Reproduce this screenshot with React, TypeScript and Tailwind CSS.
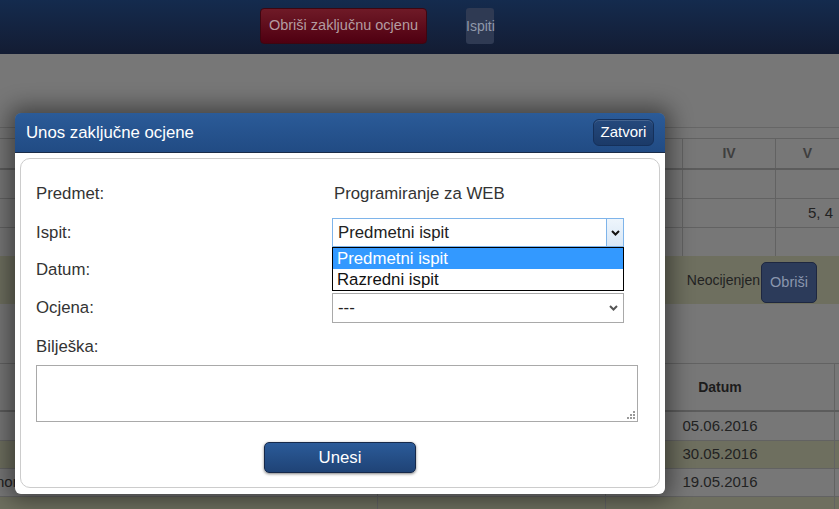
import React from "react";

function Chevron({ color = "#222" }: { color?: string }) {
  return (
    <svg width="9" height="6" viewBox="0 0 9 6">
      <path d="M1 1 L4.5 4.5 L8 1" fill="none" stroke={color} strokeWidth="2" />
    </svg>
  );
}

function Row({ children, olive = false, h = "h-[28px]" }: { children?: React.ReactNode; olive?: boolean; h?: string }) {
  return (
    <div className={`grid grid-cols-[378px_228px_229px_1fr] ${h} border-b border-[#626262] ${olive ? "bg-[#6e6f5f]" : "bg-[#777777]"}`}>
      {children}
    </div>
  );
}

export default function App() {
  return (
    <div className="relative w-[839px] h-[509px] overflow-hidden bg-[#777777] font-['Liberation_Sans',sans-serif] text-[14px] text-[#222]">
      {/* top bar */}
      <nav className="h-[54px] bg-gradient-to-b from-[#142b4e] to-[#131c33] flex items-start pt-[8px] pl-[260px] gap-[39px]">
        <button className="w-[167px] h-[36px] whitespace-nowrap rounded-[4px] border border-[#3e0610] bg-gradient-to-b from-[#6f1a27] to-[#4f0011] text-[14.5px] text-[#b49ca0]">
          Obriši zaključnu ocjenu
        </button>
        <button className="w-[28px] h-[36px] whitespace-nowrap rounded-[3px] bg-[#2f3a53] text-[14px] text-[#8f98aa]">Ispiti</button>
      </nav>

      <div className="h-[74px] bg-[#777777] border-b border-[#666]" />

      {/* table 1 */}
      <div className="pt-[10px] bg-[#777777]">
        <div className="grid grid-cols-[683px_93px_1fr] h-[32px] border-y border-[#626262] border-b-2 border-b-[#5c5c5c] font-bold text-[#3e3e3e]">
          <div className="border-r border-[#626262]" />
          <div className="border-r border-[#626262] flex items-center justify-center">IV</div>
          <div className="flex items-center justify-center">V</div>
        </div>
        <div className="grid grid-cols-[683px_93px_1fr] h-[29px] border-b border-[#626262]">
          <div className="border-r border-[#626262]" />
          <div className="border-r border-[#626262]" />
          <div />
        </div>
        <div className="grid grid-cols-[683px_93px_1fr] h-[29px] border-b border-[#626262]">
          <div className="border-r border-[#626262]" />
          <div className="border-r border-[#626262]" />
          <div className="flex items-center justify-end pr-[6px] text-[15px]">5, 4</div>
        </div>
        <div className="grid grid-cols-[683px_93px_1fr] h-[28px]">
          <div className="border-r border-[#626262]" />
          <div className="border-r border-[#626262]" />
          <div />
        </div>
      </div>
      <div className="h-[48px] bg-[#6e6f5f] flex items-end justify-end pr-[22px] pb-[1px]">
        <span className="mb-[12px]">Neocijenjen</span>
        <button className="ml-[1px] w-[56px] h-[41px] rounded-[5px] border border-[#1e2740] bg-[#2c3b5a] text-[14.5px] text-[#8a96ae]">
          Obriši
        </button>
      </div>

      {/* table 2 */}
      <div className="pt-[59px] bg-[#777777]">
        <div className="grid grid-cols-[378px_228px_229px_1fr] h-[49px] border-t border-[#626262] border-b-2 border-b-[#5c5c5c]">
          <div className="border-r border-[#626262]" />
          <div className="border-r border-[#626262]" />
          <div className="border-r border-[#626262] flex items-center justify-center font-bold text-[#1c1c1c]">Datum</div>
          <div />
        </div>
        <Row h="h-[29px]">
          <div className="border-r border-[#626262]" />
          <div className="border-r border-[#626262]" />
          <div className="border-r border-[#626262] flex items-center justify-center text-[15px]">05.06.2016</div>
        </Row>
        <Row olive>
          <div className="border-r border-[#626262]" />
          <div className="border-r border-[#626262]" />
          <div className="border-r border-[#626262] flex items-center justify-center text-[15px]">30.05.2016</div>
        </Row>
        <Row>
          <div className="border-r border-[#626262] flex items-center text-[15px]">
            <span className="-ml-[4px]">nor</span>
          </div>
          <div className="border-r border-[#626262]" />
          <div className="border-r border-[#626262] flex items-center justify-center text-[15px]">19.05.2016</div>
        </Row>
        <Row olive>
          <div className="border-r border-[#626262]" />
          <div className="border-r border-[#626262] flex items-start pt-[8px] justify-center text-[15px]">5</div>
          <div className="border-r border-[#626262] flex items-start pt-[8px] justify-center text-[15px]">09.05.2016</div>
        </Row>
      </div>

      {/* modal */}
      <div className="absolute left-[15px] top-[113px] w-[650px] h-[381px] rounded-[6px] shadow-[0_0_22px_6px_rgba(0,0,0,0.45)] flex flex-col text-[16.8px]">
        <div className="h-[40px] rounded-t-[6px] bg-gradient-to-b from-[#2b5b98] to-[#214b84] border-b border-[#1a2c48] flex items-center justify-between pl-[11px] pr-[11px]">
          <span className="text-white">Unos zaključne ocjene</span>
          <button className="w-[61px] h-[27px] rounded-[6px] border border-[#15305a] bg-gradient-to-b from-[#25497d] to-[#1b3a68] shadow-[inset_0_1px_0_rgba(255,255,255,0.15)] text-white text-[15px]">
            Zatvori
          </button>
        </div>
        <div className="flex-1 bg-white rounded-b-[6px] px-[5px] pt-[5px] pb-[6px]">
          <div className="h-full rounded-[10px] border border-[#cccccc] pl-[15px] pr-[21px] text-[#333]">
            <div className="mt-[20px] h-[30px] grid grid-cols-[296px_1fr] items-center">
              <span>Predmet:</span>
              <span className="pl-[2px]">Programiranje za WEB</span>
            </div>
            <div className="mt-[9px] h-[29px] grid grid-cols-[296px_292px] items-center">
              <span>Ispit:</span>
              <div className="relative h-[29px]">
                <div className="h-full border border-[#7eb4ea] flex items-center justify-between">
                  <span className="pl-[5px] text-[#222]">Predmetni ispit</span>
                  <span className="h-full w-[17px] border-l border-[#7eb4ea] bg-gradient-to-b from-[#eef5fc] to-[#d8e7f6] flex items-center justify-center">
                    <Chevron color="#111" />
                  </span>
                </div>
                <div className="absolute left-0 top-full w-[292px] h-[44px] border border-black bg-white z-10 flex flex-col">
                  <div className="h-[21px] bg-[#3399ff] text-white pl-[4px] flex items-center">Predmetni ispit</div>
                  <div className="h-[21px] text-[#111] pl-[4px] flex items-center">Razredni ispit</div>
                </div>
              </div>
            </div>
            <div className="h-[46px] flex items-center">
              <span>Datum:</span>
            </div>
            <div className="h-[30px] grid grid-cols-[296px_292px] items-center">
              <span>Ocjena:</span>
              <div className="h-[30px] border border-[#a9a9a9] flex items-center justify-between pl-[5px] pr-[5px]">
                <span className="text-[#222]">---</span>
                <Chevron color="#555" />
              </div>
            </div>
            <div className="mt-[9px] h-[30px] flex items-center">
              <span>Bilješka:</span>
            </div>
            <div className="relative mt-[3px] h-[57px] border border-[#a9a9a9]">
              <svg className="absolute right-[2px] bottom-[2px]" width="8" height="8" viewBox="0 0 8 8">
                <rect x="6" y="0" width="2" height="2" fill="#999" />
                <rect x="3" y="3" width="2" height="2" fill="#999" />
                <rect x="6" y="3" width="2" height="2" fill="#999" />
                <rect x="0" y="6" width="2" height="2" fill="#999" />
                <rect x="3" y="6" width="2" height="2" fill="#999" />
                <rect x="6" y="6" width="2" height="2" fill="#999" />
              </svg>
            </div>
            <div className="mt-[20px] flex justify-center pl-[6px]">
              <button className="w-[152px] h-[31px] rounded-[5px] border border-[#16294a] bg-gradient-to-b from-[#2b5b99] to-[#1f4376] shadow-[0_1px_3px_rgba(0,0,0,0.5)] text-white">
                Unesi
              </button>
            </div>
          </div>
        </div>
      </div>
    </div>
  );
}
